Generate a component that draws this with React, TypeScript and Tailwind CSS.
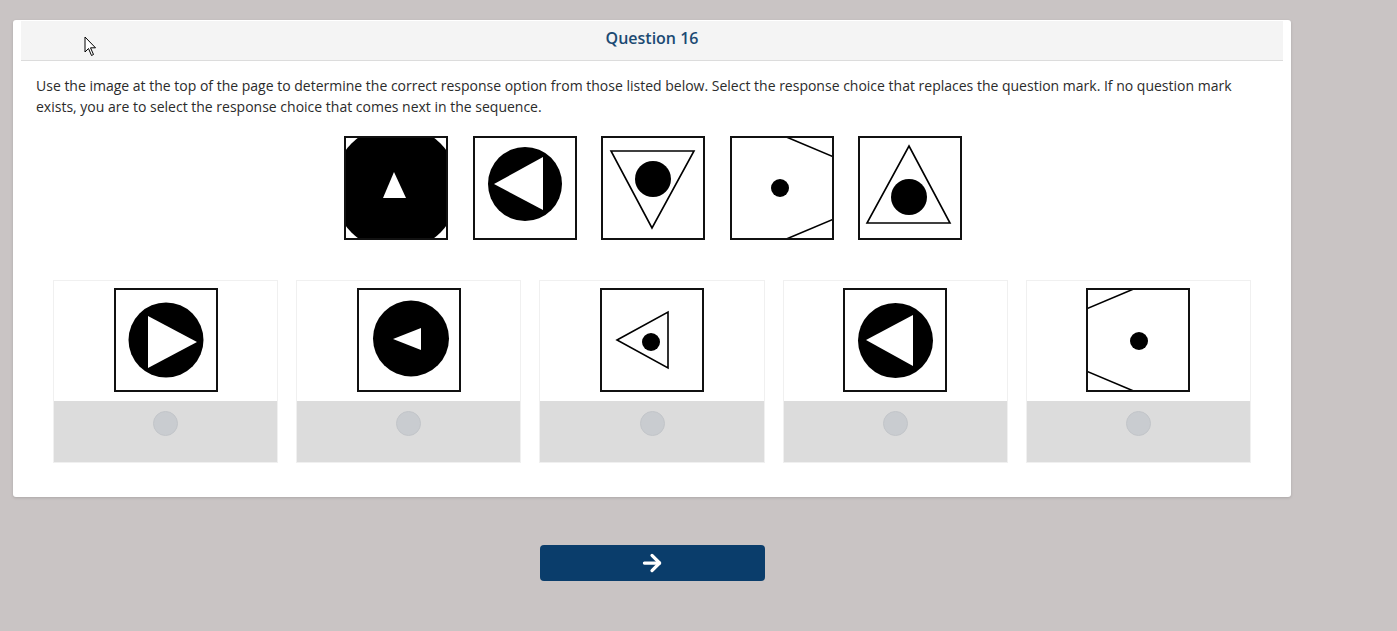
import { ArrowRight } from "lucide-react";

const Frame = ({ children }: { children: React.ReactNode }) => (
  <svg width="104" height="104" viewBox="0 0 104 104" className="block">
    <defs>
      <clipPath id="clip">
        <rect x="0" y="0" width="104" height="104" />
      </clipPath>
    </defs>
    <g clipPath="url(#clip)">{children}</g>
    <rect x="1" y="1" width="102" height="102" fill="none" stroke="#111" strokeWidth="2" />
  </svg>
);

const stimuli: React.ReactNode[] = [
  <>
    <circle cx="52" cy="52" r="63" fill="#000" />
    <polygon points="50,36 39,62 62,62" fill="#fff" />
  </>,
  <>
    <circle cx="52" cy="48" r="37" fill="#000" />
    <polygon points="21,48 70,21 70,74" fill="#fff" />
  </>,
  <>
    <polygon points="10,15 93,15 51,92" fill="none" stroke="#000" strokeWidth="1.6" />
    <circle cx="52" cy="43" r="18" fill="#000" />
  </>,
  <>
    <line x1="54" y1="0" x2="104" y2="21" stroke="#000" strokeWidth="1.6" />
    <line x1="54" y1="104" x2="104" y2="83" stroke="#000" strokeWidth="1.6" />
    <circle cx="50" cy="52" r="9" fill="#000" />
  </>,
  <>
    <polygon points="51,10 92,87 9,87" fill="none" stroke="#000" strokeWidth="1.6" />
    <circle cx="51" cy="61" r="18" fill="#000" />
  </>,
];

const options: React.ReactNode[] = [
  <>
    <circle cx="52" cy="52" r="37.5" fill="#000" />
    <polygon points="34,28 83,54 34,80" fill="#fff" />
  </>,
  <>
    <circle cx="54" cy="50.5" r="38" fill="#000" />
    <polygon points="36,51 64,40 64,62" fill="#fff" />
  </>,
  <>
    <polygon points="17,52 68,24 68,80" fill="none" stroke="#000" strokeWidth="1.6" />
    <circle cx="51" cy="54" r="9" fill="#000" />
  </>,
  <>
    <circle cx="52.5" cy="52.5" r="37.5" fill="#000" />
    <polygon points="23,52 70,27 70,78" fill="#fff" />
  </>,
  <>
    <line x1="0" y1="21" x2="50" y2="0" stroke="#000" strokeWidth="1.6" />
    <line x1="0" y1="83" x2="50" y2="104" stroke="#000" strokeWidth="1.6" />
    <circle cx="53" cy="53" r="9" fill="#000" />
  </>,
];

const Cursor = () => (
  <svg width="14" height="22" viewBox="0 0 14 22" className="absolute left-[84px] top-[36px]">
    <path
      d="M1 1 L1 16 L4.5 12.5 L7.5 19.5 L9.5 18.5 L6.5 11.8 L11.5 11.8 Z"
      fill="#fff"
      stroke="#000"
      strokeWidth="1"
      strokeLinejoin="round"
    />
  </svg>
);

const App = () => {
  return (
    <div
      className="relative min-h-[631px] w-full bg-[#c9c4c4] pt-[20px]"
      style={{ fontFamily: "'Open Sans', Lato, sans-serif" }}
    >
      <div className="ml-[13px] w-[1278px]">
        <div className="rounded-[3px] bg-white pb-[34px] pt-[1px] shadow-[0_1px_3px_rgba(0,0,0,0.15)]">
          <div className="mx-[8px] flex h-[40px] items-center justify-center border-b border-[#dcdcdc] bg-[#f4f4f4] pb-[5px]">
            <h2 className="text-[16px] font-semibold text-[#1b4a73]">Question 16</h2>
          </div>

          <p className="px-[23px] pt-[14px] text-[14px] leading-[21px] text-[#2b2b2b]">
            Use the image at the top of the page to determine the correct response option from those listed below.
            Select the response choice that replaces the question mark. If no question mark exists, you are to select
            the response choice that comes next in the sequence.
          </p>

          <div className="mt-[19px] flex justify-center gap-[24.5px] pl-[2px]">
            {stimuli.map((s, i) => (
              <Frame key={i}>{s}</Frame>
            ))}
          </div>

          <div className="mt-[40px] flex gap-[18px] px-[40px]">
            {options.map((o, i) => (
              <div key={i} className="flex w-[225.6px] flex-col border border-[#f0f0f0]">
                <div className="flex h-[120px] items-start justify-center bg-white pt-[7px]">
                  <Frame>{o}</Frame>
                </div>
                <div className="flex h-[61px] justify-center bg-[#dcdcdc] pt-[10px]">
                  <div className="h-[25px] w-[25px] rounded-full border border-[#c2c5c9] bg-[#c9ccd0]" />
                </div>
              </div>
            ))}
          </div>
        </div>

        <div className="mt-[48px] flex justify-center">
          <button className="flex h-[36px] w-[225px] items-center justify-center rounded-[4px] bg-[#0a3d6b] text-white">
            <ArrowRight size={26} strokeWidth={3} />
          </button>
        </div>
      </div>

      <Cursor />
    </div>
  );
};

export default App;
